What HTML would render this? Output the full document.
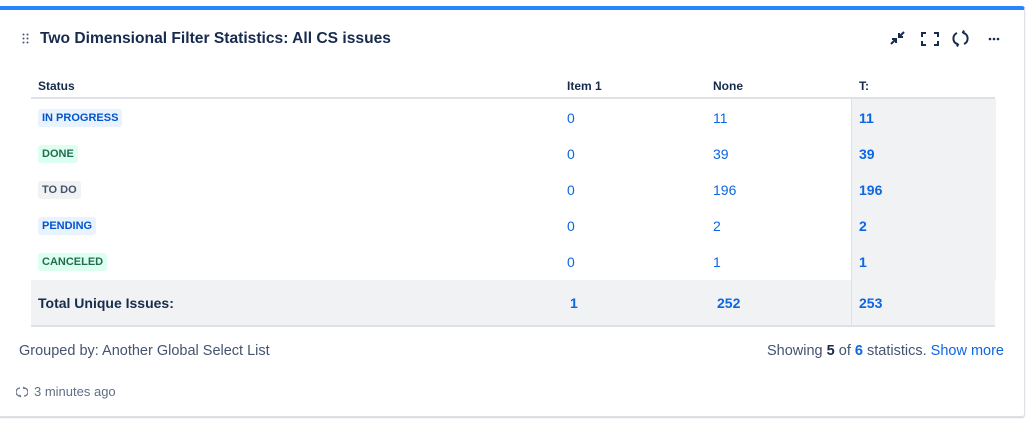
<!DOCTYPE html>
<html><head><style>
body{margin:0;width:1032px;height:421px;background:#fff;font-family:"Liberation Sans",sans-serif;color:#172b4d;position:relative;overflow:hidden}
.card{position:absolute;left:-2px;top:6px;width:1027px;height:411px;border:1px solid #dfe1e6;border-top:4px solid #2684ff;border-radius:3px;box-sizing:border-box;box-shadow:0 1px 1px rgba(9,30,66,.2)}
.a{position:absolute;white-space:nowrap}
.title{left:40px;top:30px;font-size:15.6px;font-weight:bold}
.hdr{font-size:12px;font-weight:bold;top:79px}
.lz{left:31px;width:964px;height:2px;background:#dfe1e6;position:absolute;top:97px}
.tcol{position:absolute;left:851px;top:99px;width:144px;height:181px;background:#f1f2f4;border-left:1px solid #dfe1e6}
.tot{position:absolute;left:31px;top:280px;width:964px;height:45px;background:#f1f2f4;border-bottom:2px solid #dfe1e6}
.tot .sep{position:absolute;left:820px;top:0;width:1px;height:45px;background:#dfe1e6}
.lbl{font-size:11px;font-weight:bold;padding:3px 4px;border-radius:3px;left:38px}
.n{font-size:14px;color:#0c66e4}
.b{font-weight:bold}
.ic{position:absolute}
</style></head><body>
<div class="card"></div>
<svg class="ic" style="left:22px;top:33px" width="8" height="12"><g fill="#44546f"><circle cx="1.5" cy="1.5" r="1"/><circle cx="5.5" cy="1.5" r="1"/><circle cx="1.5" cy="5.5" r="1"/><circle cx="5.5" cy="5.5" r="1"/><circle cx="1.5" cy="9.5" r="1"/><circle cx="5.5" cy="9.5" r="1"/></g></svg>
<div class="a title">Two Dimensional Filter Statistics: All CS issues</div>
<svg class="ic" style="left:888px;top:29px" width="120" height="18" fill="none" stroke="#172b4d" stroke-width="2">
<path d="M3 15l5-5M4 10h4v4M16 3l-5 5M11 4v4h4"/>
<path d="M34 8V4h4M46 4h4v4M50 12v4h-4M38 16h-4v-4"/>
<path d="M69 4a6 6 0 0 0 0 11M68 14l2 1.5-1 2M76 15a6 6 0 0 0 0-11M77 5l-2-1.5 1-2"/>
<g fill="#172b4d" stroke="none"><circle cx="102" cy="10" r="1.3"/><circle cx="106" cy="10" r="1.3"/><circle cx="110" cy="10" r="1.3"/></g>
</svg>
<div class="tcol"></div>
<div class="lz"></div>
<div class="a hdr" style="left:38px">Status</div>
<div class="a hdr" style="left:567px">Item 1</div>
<div class="a hdr" style="left:713px">None</div>
<div class="a hdr" style="left:859px">T:</div>

<div class="a lbl" style="top:109px;background:#e9f2ff;color:#0055cc">IN PROGRESS</div>
<div class="a lbl" style="top:145px;background:#dcfff1;color:#216e4e">DONE</div>
<div class="a lbl" style="top:181px;background:#f1f2f4;color:#44546f">TO DO</div>
<div class="a lbl" style="top:217px;background:#e9f2ff;color:#0055cc">PENDING</div>
<div class="a lbl" style="top:253px;background:#dcfff1;color:#216e4e">CANCELED</div>

<div class="a n" style="left:567px;top:110px">0</div><div class="a n" style="left:713px;top:110px">11</div><div class="a n b" style="left:859px;top:110px">11</div>
<div class="a n" style="left:567px;top:146px">0</div><div class="a n" style="left:713px;top:146px">39</div><div class="a n b" style="left:859px;top:146px">39</div>
<div class="a n" style="left:567px;top:182px">0</div><div class="a n" style="left:713px;top:182px">196</div><div class="a n b" style="left:859px;top:182px">196</div>
<div class="a n" style="left:567px;top:218px">0</div><div class="a n" style="left:713px;top:218px">2</div><div class="a n b" style="left:859px;top:218px">2</div>
<div class="a n" style="left:567px;top:254px">0</div><div class="a n" style="left:713px;top:254px">1</div><div class="a n b" style="left:859px;top:254px">1</div>

<div class="tot"><div class="sep"></div></div>
<div class="a b" style="left:38px;top:295px;font-size:14px">Total Unique Issues:</div>
<div class="a n b" style="left:570px;top:295px">1</div>
<div class="a n b" style="left:717px;top:295px">252</div>
<div class="a n b" style="left:859px;top:295px">253</div>

<div class="a" style="left:19px;top:343px;font-size:14.5px;color:#44546f">Grouped by: Another Global Select List</div>
<div class="a" style="right:28px;top:343px;font-size:14.5px;color:#44546f">Showing <b style="color:#172b4d">5</b> of <b style="color:#0c66e4">6</b> statistics. <span style="color:#0c66e4">Show more</span></div>
<svg class="ic" style="left:16px;top:386px" width="12" height="12" fill="none" stroke="#626f86" stroke-width="1.2"><path d="M4 2a4 4 0 0 0 0 8M3.5 9l1 1-.5 1.2M8 10a4 4 0 0 0 0-8M8.5 3l-1-1 .5-1.2"/></svg>
<div class="a" style="left:34px;top:384px;font-size:13px;color:#626f86">3 minutes ago</div>
</body></html>
